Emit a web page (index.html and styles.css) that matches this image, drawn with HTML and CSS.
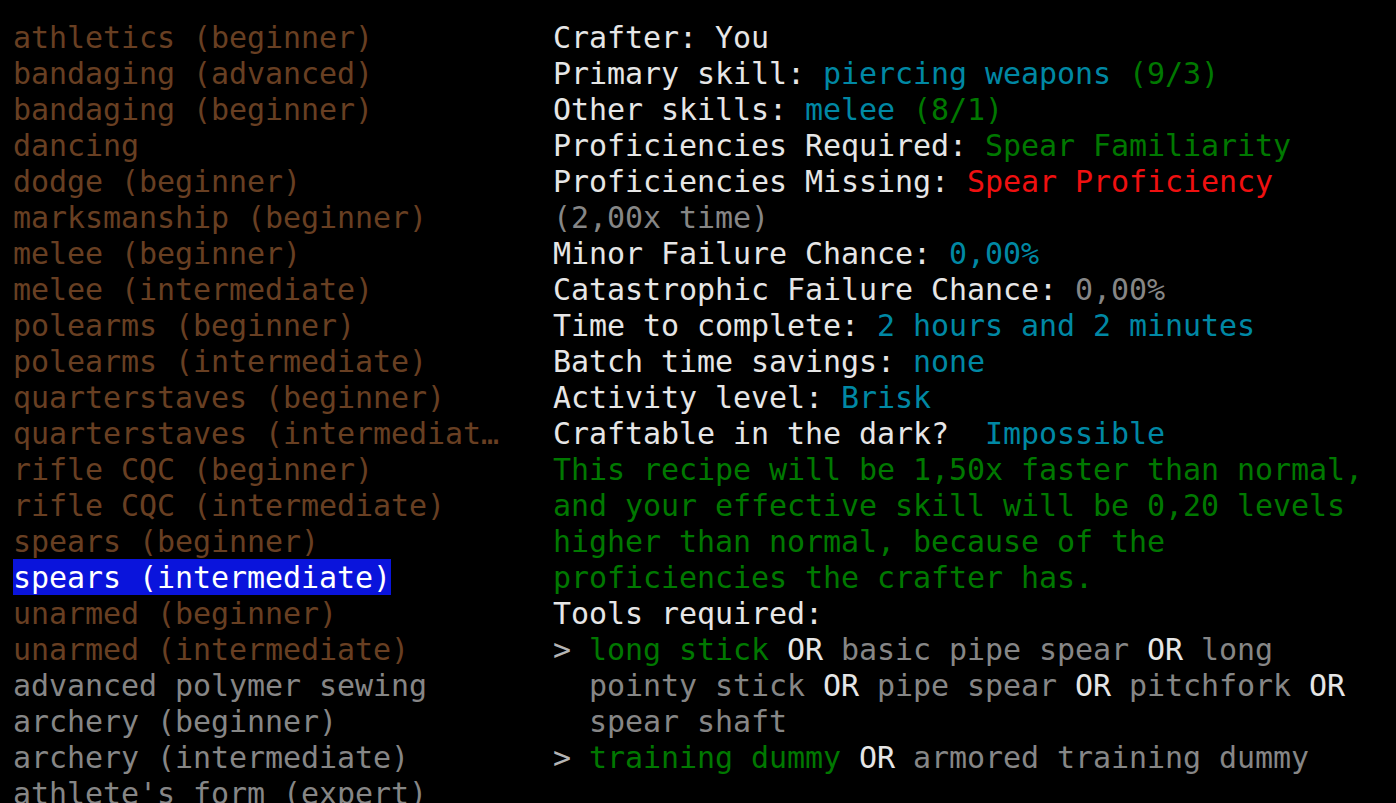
FILE: index.html
```html
<!DOCTYPE html>
<html>
<head>
<meta charset="utf-8">
<link rel="stylesheet" href="styles.css">
</head>
<body>
<div class="screen">
  <div class="list">
    <div class="ln br">athletics (beginner)</div>
    <div class="ln br">bandaging (advanced)</div>
    <div class="ln br">bandaging (beginner)</div>
    <div class="ln br">dancing</div>
    <div class="ln br">dodge (beginner)</div>
    <div class="ln br">marksmanship (beginner)</div>
    <div class="ln br">melee (beginner)</div>
    <div class="ln br">melee (intermediate)</div>
    <div class="ln br">polearms (beginner)</div>
    <div class="ln br">polearms (intermediate)</div>
    <div class="ln br">quarterstaves (beginner)</div>
    <div class="ln br">quarterstaves (intermediat…</div>
    <div class="ln br">rifle CQC (beginner)</div>
    <div class="ln br">rifle CQC (intermediate)</div>
    <div class="ln br">spears (beginner)</div>
    <div class="ln"><span class="sel">spears (intermediate)</span></div>
    <div class="ln br">unarmed (beginner)</div>
    <div class="ln br">unarmed (intermediate)</div>
    <div class="ln gy">advanced polymer sewing</div>
    <div class="ln gy">archery (beginner)</div>
    <div class="ln gy">archery (intermediate)</div>
    <div class="ln gy">athlete's form (expert)</div>
  </div>
  <div class="detail">
    <div class="ln wh">Crafter: You</div>
    <div class="ln wh">Primary skill: <span class="cy">piercing weapons</span><span class="gn"> (9/3)</span></div>
    <div class="ln wh">Other skills: <span class="cy">melee</span><span class="gn"> (8/1)</span></div>
    <div class="ln wh">Proficiencies Required: <span class="gn">Spear Familiarity</span></div>
    <div class="ln wh">Proficiencies Missing: <span class="rd">Spear Proficiency</span></div>
    <div class="ln gy">(2,00x time)</div>
    <div class="ln wh">Minor Failure Chance: <span class="cy">0,00%</span></div>
    <div class="ln wh">Catastrophic Failure Chance: <span class="gy">0,00%</span></div>
    <div class="ln wh">Time to complete: <span class="cy">2 hours and 2 minutes</span></div>
    <div class="ln wh">Batch time savings: <span class="cy">none</span></div>
    <div class="ln wh">Activity level: <span class="cy">Brisk</span></div>
    <div class="ln wh">Craftable in the dark?  <span class="cy">Impossible</span></div>
    <div class="ln gn">This recipe will be 1,50x faster than normal,</div>
    <div class="ln gn">and your effective skill will be 0,20 levels</div>
    <div class="ln gn">higher than normal, because of the</div>
    <div class="ln gn">proficiencies the crafter has.</div>
    <div class="ln wh">Tools required:</div>
    <div class="ln wh"><span class="lg">&gt; </span><span class="gn">long stick</span> OR <span class="gy">basic pipe spear</span> OR <span class="gy">long</span></div>
    <div class="ln wh">  <span class="gy">pointy stick</span> OR <span class="gy">pipe spear</span> OR <span class="gy">pitchfork</span> OR</div>
    <div class="ln wh">  <span class="gy">spear shaft</span></div>
    <div class="ln wh"><span class="lg">&gt; </span><span class="gn">training dummy</span> OR <span class="gy">armored training dummy</span></div>
  </div>
</div>
</body>
</html>
```
FILE: styles.css
```css
html, body {
  margin: 0;
  padding: 0;
  background: #000;
  height: 100%;
  overflow: hidden;
}
.screen {
  display: grid;
  grid-template-columns: 540px 1fr;
  padding: 19px 0 0 13px;
  font-family: "DejaVu Sans Mono", "Liberation Mono", monospace;
  font-size: 30px;
  letter-spacing: -0.06px;
  line-height: 36px;
}
.ln {
  height: 36px;
  padding-top: 1px;
  box-sizing: border-box;
  white-space: pre;
}
.br { color: #683f22; }
.gy { color: #868686; }
.wh { color: #e6e6e6; }
.lg { color: #b4b4b4; }
.cy { color: #0088a4; }
.gn { color: #007800; }
.rd { color: #f01010; }
.sel {
  display: inline-block;
  background: #0a14dc;
  color: #ffffff;
  height: 36px;
  margin-top: -1px;
  padding-top: 1px;
  box-sizing: border-box;
}
```
